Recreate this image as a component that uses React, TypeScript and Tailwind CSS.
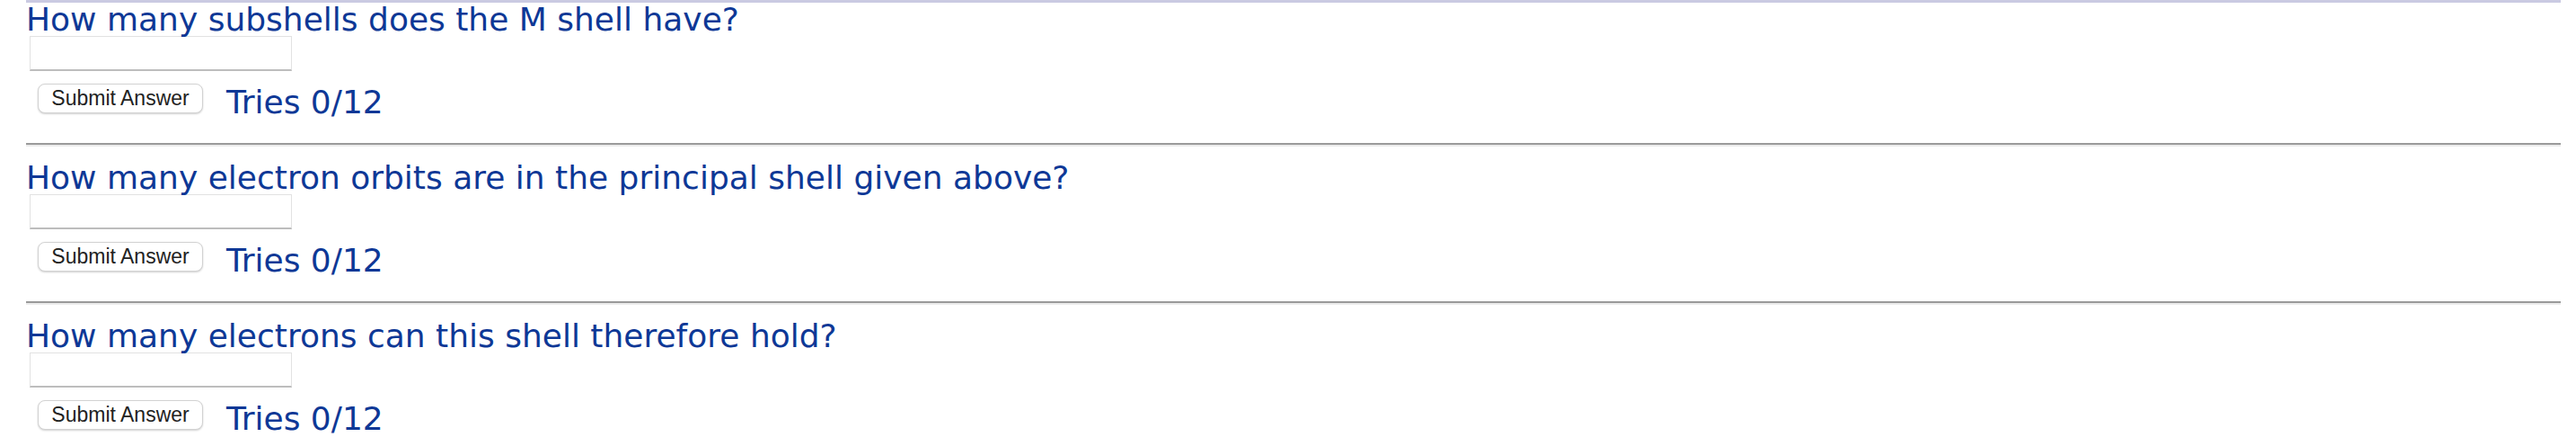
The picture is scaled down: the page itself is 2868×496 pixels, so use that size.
const questions = [
  "How many subshells does the M shell have?",
  "How many electron orbits are in the principal shell given above?",
  "How many electrons can this shell therefore hold?",
];

function Question({ text, first }: { text: string; first?: boolean }) {
  return (
    <div className={first ? "" : "mt-[16px]"}>
      <p className="text-[36px] leading-[37px] text-[#0e3896] [font-family:'DejaVu_Sans',Verdana,sans-serif]">
        {text}
      </p>
      <input
        type="text"
        className="ml-[4px] block h-[39px] w-[292px] border border-[#e2e2e2] border-b-2 border-b-[#bdbdbd] bg-white outline-none"
      />
      <div className="mt-[14px] flex h-[33px] items-start">
        <button className="ml-[13px] h-[33px] w-[184px] rounded-[8px] border border-[#d2d2d2] bg-white text-[23px] leading-none text-[#222] shadow-[0_1px_2px_rgba(0,0,0,0.18)] [font-family:'Liberation_Sans',Arial,sans-serif]">
          Submit Answer
        </button>
        <span className="ml-[26px] mt-[2px] text-[36px] leading-[37px] text-[#0e3896] [font-family:'DejaVu_Sans',Verdana,sans-serif]">
          Tries 0/12
        </span>
      </div>
    </div>
  );
}

export default function App() {
  return (
    <div className="h-[496px] w-full overflow-hidden bg-white pl-[29px] pr-[17px]">
      <div className="border-t-[3px] border-[#cacae2]">
        {questions.map((q, i) => (
          <div key={i}>
            <Question text={q} first={i === 0} />
            {i < questions.length - 1 && (
              <hr className="mt-[33px] border-0 border-t-2 border-b-2 border-t-[#9a9a9a] border-b-[#ececec]" />
            )}
          </div>
        ))}
      </div>
    </div>
  );
}
